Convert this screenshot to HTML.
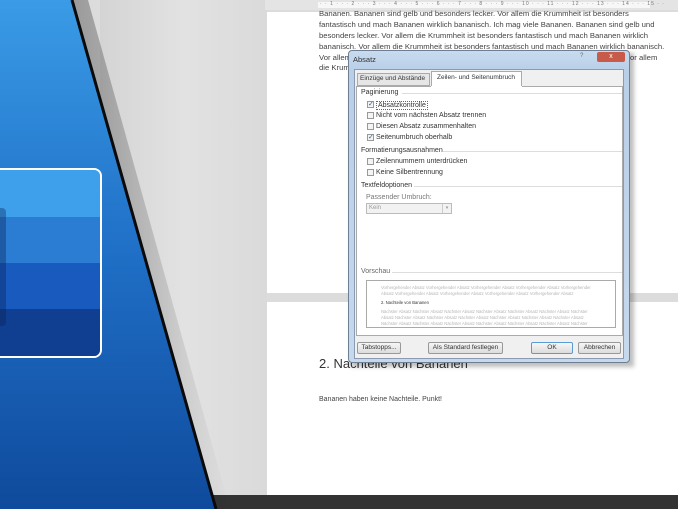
<!DOCTYPE html>
<html><head><meta charset="utf-8"><style>
*{margin:0;padding:0;box-sizing:border-box}
body{width:678px;height:509px;overflow:hidden;position:relative;background:#dcdcdc;font-family:"Liberation Sans",sans-serif}
.a{position:absolute}
.t{position:absolute;font-size:7px;color:#333;white-space:nowrap}
.doc{position:absolute;left:319px;font-size:7.7px;color:#444;white-space:nowrap}
.cb{position:absolute;left:367px;width:7px;height:7px;border:1px solid #999;background:#f4f4f4;font-size:7px;line-height:5px;color:#2a5aa8;text-align:center}
.btn{position:absolute;top:342px;height:12px;border:1px solid #999;border-radius:2px;background:linear-gradient(#f6f6f6,#dcdcdc);font-size:6.5px;color:#333;text-align:center;line-height:10px}
.sec{position:absolute;left:361px;font-size:7px;color:#333;white-space:nowrap}
.ln{position:absolute;height:1px;background:#ddd;right:8px}
.pv{position:absolute;left:381px;font-size:4.2px;color:#b5b5b5;white-space:nowrap}
</style></head><body>
<div class="a" style="left:100px;top:0;width:167px;height:509px;background:linear-gradient(90deg,#d4d4d4,#e2e2e2 50%,#dadada)"></div>
<!-- ruler -->
<div class="a" style="left:265px;top:0;width:413px;height:10px;background:#e4e4e4"></div>
<div class="a" style="left:318px;top:2px;width:332px;height:6px;background:#f7f7f7"></div>
<div class="t" style="left:320px;top:1px;font-size:5px;color:#777;letter-spacing:1px">· · 1 · · · 2 · · · 3 · · · 4 · · · 5 · · · 6 · · · 7 · · · 8 · · · 9 · · · 10 · · · 11 · · · 12 · · · 13 · · · 14 · · · 15 · ·</div>
<!-- pages -->
<div class="a" style="left:267px;top:12px;width:411px;height:281px;background:#fff"></div>
<div class="a" style="left:267px;top:302px;width:411px;height:193px;background:#fff"></div>
<div class="a" style="left:0;top:495px;width:678px;height:14px;background:#333"></div>
<div class="doc" style="top:9px">Bananen. Bananen sind gelb und besonders lecker. Vor allem die Krummheit ist besonders</div>
<div class="doc" style="top:20px">fantastisch und mach Bananen wirklich bananisch. Ich mag viele Bananen. Bananen sind gelb und</div>
<div class="doc" style="top:31px">besonders lecker. Vor allem die Krummheit ist besonders fantastisch und mach Bananen wirklich</div>
<div class="doc" style="top:42px">bananisch. Vor allem die Krummheit ist besonders fantastisch und mach Bananen wirklich bananisch.</div>
<div class="doc" style="top:53px">Vor allem</div><div class="doc" style="top:53px;left:630px">or allem</div>
<div class="doc" style="top:63px">die Krum</div>
<div class="doc" style="top:356px;font-size:13px;color:#333">2. Nachteile von Bananen</div>
<div class="doc" style="top:396px;font-size:7px">Bananen haben keine Nachteile. Punkt!</div>
<!-- blue panel -->
<svg class="a" style="left:0;top:0" width="240" height="509">
<defs><linearGradient id="g" x1="0" y1="0" x2="0" y2="1"><stop offset="0" stop-color="#3a9be6"/><stop offset="0.5" stop-color="#1f6fc6"/><stop offset="1" stop-color="#0f4a9c"/></linearGradient>
<linearGradient id="sh" x1="0" y1="0" x2="1" y2="0"><stop offset="0" stop-color="#000" stop-opacity="0.5"/><stop offset="1" stop-color="#000" stop-opacity="0"/></linearGradient></defs>
<polygon points="73,0 88,0 230,509 215,509" fill="url(#sh)" opacity="0.6"/>
<polygon points="0,0 72,0 216,509 0,509" fill="url(#g)"/>
<line x1="72" y1="0" x2="216" y2="509" stroke="#0a0a0a" stroke-width="3"/>
</svg>
<!-- word logo -->
<div class="a" style="left:-20px;top:168px;width:122px;height:190px;border:2px solid #fff;border-radius:8px;overflow:hidden">
<div style="height:47px;background:#3ea0eb"></div><div style="height:46px;background:#2b7cd3"></div><div style="height:46px;background:#185abd"></div><div style="height:47px;background:#103f91"></div></div>
<div class="a" style="left:-10px;top:208px;width:16px;height:118px;border-radius:4px;background:rgba(10,30,80,.35)"></div>
<!-- dialog -->
<div class="a" style="left:351px;top:53px;width:283px;height:314px;background:rgba(0,0,0,.25);filter:blur(2px)"></div>
<div class="a" style="left:348px;top:50px;width:282px;height:313px;border:1px solid #6f7f93;border-radius:4px;background:linear-gradient(#c8dbef,#b9cfe8 20px,#c6d8ec)"></div>
<div class="t" style="left:353px;top:55px;font-size:7.5px">Absatz</div>
<div class="a" style="left:597px;top:52px;width:28px;height:10px;border-radius:2px;background:#c75a48;color:#fff;font-size:7px;text-align:center;line-height:10px">x</div>
<div class="a" style="left:580px;top:53px;width:15px;height:8px;color:#666;font-size:6px">?</div>
<div class="a" style="left:354px;top:69px;width:270px;height:290px;background:#f0f0f0;border:1px solid #8a9ab0"></div>
<div class="a" style="left:357px;top:73px;width:73px;height:13px;border:1px solid #aaa;background:#e6e6e6"></div>
<div class="t" style="left:360px;top:75px;font-size:6.5px">Einzüge und Abstände</div>
<div class="a" style="left:431px;top:71px;width:91px;height:16px;border:1px solid #aaa;border-bottom:none;background:#fff"></div>
<div class="t" style="left:437px;top:74px;font-size:6.5px">Zeilen- und Seitenumbruch</div>
<div class="a" style="left:356px;top:86px;width:267px;height:250px;border:1px solid #aaa;border-top:none;background:#fff"></div>
<div class="a" style="left:356px;top:86px;width:75px;height:1px;background:#aaa"></div>
<div class="a" style="left:522px;top:86px;width:101px;height:1px;background:#aaa"></div>
<div class="sec" style="top:89px">Paginierung</div><div class="ln" style="left:402px;top:93px;right:56px"></div>
<div class="cb" style="top:101px">✓</div><div class="t" style="left:376px;top:101px;border:1px dotted #666;padding:0 1px">Absatzkontrolle</div>
<div class="cb" style="top:112px"></div><div class="t" style="left:376px;top:112px">Nicht vom nächsten Absatz trennen</div>
<div class="cb" style="top:123px"></div><div class="t" style="left:376px;top:123px">Diesen Absatz zusammenhalten</div>
<div class="cb" style="top:134px">✓</div><div class="t" style="left:376px;top:134px">Seitenumbruch oberhalb</div>
<div class="sec" style="top:147px">Formatierungsausnahmen</div><div class="ln" style="left:443px;top:151px;right:56px"></div>
<div class="cb" style="top:158px"></div><div class="t" style="left:376px;top:158px">Zeilennummern unterdrücken</div>
<div class="cb" style="top:169px"></div><div class="t" style="left:376px;top:169px">Keine Silbentrennung</div>
<div class="sec" style="top:182px">Textfeldoptionen</div><div class="ln" style="left:414px;top:186px;right:56px"></div>
<div class="t" style="left:366px;top:194px;color:#777">Passender Umbruch:</div>
<div class="a" style="left:366px;top:203px;width:86px;height:11px;border:1px solid #bbb;background:#f2f2f2"></div>
<div class="t" style="left:369px;top:205px;font-size:6px;color:#999">Kein</div>
<div class="a" style="left:442px;top:204px;width:9px;height:9px;border-left:1px solid #ccc;color:#999;font-size:5px;text-align:center;line-height:9px">▾</div>
<div class="sec" style="top:268px;color:#666">Vorschau</div><div class="ln" style="left:392px;top:272px;right:56px"></div>
<div class="a" style="left:366px;top:280px;width:250px;height:48px;border:1px solid #aaa;background:#fff"></div>
<div class="pv" style="top:285px">Vorhergehender Absatz Vorhergehender Absatz Vorhergehender Absatz Vorhergehender Absatz Vorhergehender</div>
<div class="pv" style="top:291px">Absatz Vorhergehender Absatz Vorhergehender Absatz Vorhergehender Absatz Vorhergehender Absatz</div>
<div class="pv" style="top:300px;color:#333">2. Nachteile von Bananen</div>
<div class="pv" style="top:309px">Nächster Absatz Nächster Absatz Nächster Absatz Nächster Absatz Nächster Absatz Nächster Absatz Nächster</div>
<div class="pv" style="top:315px">Absatz Nächster Absatz Nächster Absatz Nächster Absatz Nächster Absatz Nächster Absatz Nächster Absatz</div>
<div class="pv" style="top:321px">Nächster Absatz Nächster Absatz Nächster Absatz Nächster Absatz Nächster Absatz Nächster Absatz Nächster</div>
<div class="btn" style="left:357px;width:44px">Tabstopps...</div>
<div class="btn" style="left:428px;width:75px">Als Standard festlegen</div>
<div class="btn" style="left:531px;width:42px;border-color:#5b9bd5">OK</div>
<div class="btn" style="left:578px;width:43px">Abbrechen</div>
</body></html>
